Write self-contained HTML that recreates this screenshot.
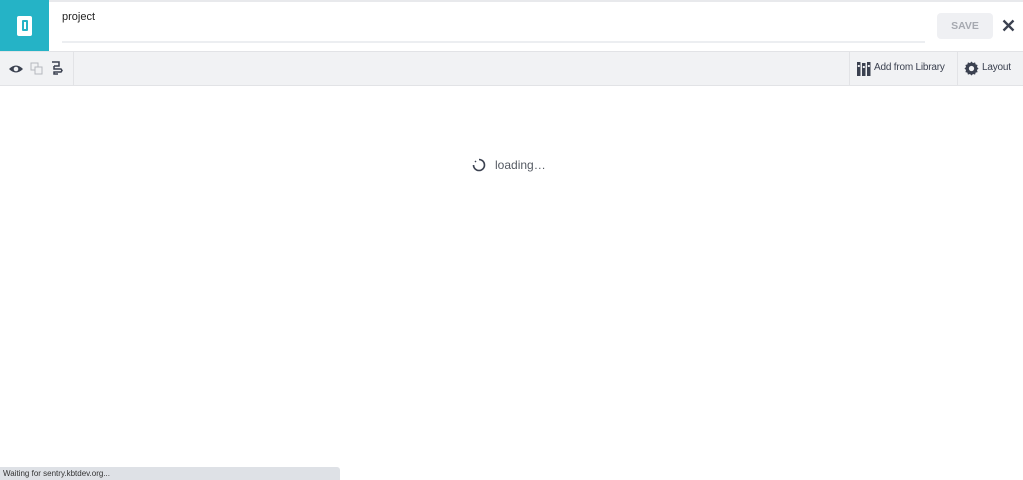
<!DOCTYPE html>
<html><head><style>
*{margin:0;padding:0;box-sizing:border-box}
body{width:1023px;height:480px;background:#fff;font-family:"Liberation Sans",sans-serif;position:relative;overflow:hidden}
.a{position:absolute}
</style></head><body>
<div class="a" style="left:0;top:0;width:1023px;height:2px;background:#e8e9ec"></div>
<div class="a" style="left:0;top:0;width:49px;height:51px;background:#25b3c6"></div>
<div class="a" style="left:17px;top:16px;width:15px;height:20px;background:#fff;border-radius:2px"></div>
<div class="a" style="left:22px;top:20px;width:6px;height:11px;border:2px solid #25b3c6;border-radius:1px"></div>
<div class="a" style="left:62px;top:11px;font-size:11px;color:#222">project</div>
<div class="a" style="left:62px;top:41px;width:863px;height:2px;background:#eceef1"></div>
<div class="a" style="left:937px;top:13px;width:56px;height:26px;background:#eff0f3;border-radius:4px;color:#a6a9b0;font-size:10.5px;font-weight:bold;text-align:center;line-height:26px">SAVE</div>
<svg class="a" style="left:1002px;top:19px" width="13" height="13"><path d="M1.5 1.5L11.5 11.5M11.5 1.5L1.5 11.5" stroke="#3b4150" stroke-width="2.3"/></svg>
<div class="a" style="left:0;top:51px;width:1023px;height:35px;background:#f1f2f4;border-top:1px solid #e2e3e6;border-bottom:1px solid #e2e3e6"></div>
<div class="a" style="left:73px;top:52px;width:1px;height:33px;background:#e2e3e6"></div>
<div class="a" style="left:849px;top:52px;width:1px;height:33px;background:#e2e3e6"></div>
<div class="a" style="left:957px;top:52px;width:1px;height:33px;background:#e2e3e6"></div>
<svg class="a" style="left:8px;top:64px" width="16" height="10"><path d="M1 5Q8 -2 15 5Q8 12 1 5Z" fill="#3b4150"/><circle cx="8" cy="5" r="2.3" fill="#f1f2f4"/></svg>
<svg class="a" style="left:30px;top:62px" width="13" height="13"><rect x="1" y="1" width="7" height="7" fill="none" stroke="#b5b8be"/><rect x="5" y="5" width="7" height="7" fill="#f1f2f4" stroke="#b5b8be"/></svg>
<svg class="a" style="left:50px;top:61px" width="13" height="15"><path d="M2 1H9V5H4M4 5V8H11L12 9.5L11 11H4V13H8" fill="none" stroke="#3b4150" stroke-width="1.5"/></svg>
<svg class="a" style="left:857px;top:61px" width="14" height="15"><rect x="0" y="1" width="3.5" height="14" fill="#3b4150"/><rect x="5" y="2" width="3.5" height="13" fill="#3b4150"/><rect x="10" y="1" width="3.5" height="14" fill="#3b4150"/><rect x="0.8" y="4" width="2" height="2" fill="#f1f2f4"/><rect x="5.8" y="5" width="2" height="2" fill="#f1f2f4"/><rect x="10.8" y="4" width="2" height="2" fill="#f1f2f4"/></svg>
<div class="a" style="left:874px;top:62px;font-size:10px;letter-spacing:-0.2px;color:#3b4150">Add from Library</div>
<svg class="a" style="left:964px;top:61px" width="15" height="15" viewBox="0 0 16 16"><path d="M8 0.5L9.6 2.2L11.8 1.5L12.4 3.6L14.5 4.2L13.8 6.4L15.5 8L13.8 9.6L14.5 11.8L12.4 12.4L11.8 14.5L9.6 13.8L8 15.5L6.4 13.8L4.2 14.5L3.6 12.4L1.5 11.8L2.2 9.6L0.5 8L2.2 6.4L1.5 4.2L3.6 3.6L4.2 1.5L6.4 2.2Z" fill="#3b4150"/><circle cx="8" cy="8" r="2.8" fill="#f1f2f4"/></svg>
<div class="a" style="left:982px;top:62px;font-size:10px;letter-spacing:-0.2px;color:#3b4150">Layout</div>
<svg class="a" style="left:472px;top:158px" width="14" height="14"><path d="M7 1.5A5.5 5.5 0 1 1 1.5 7" fill="none" stroke="#3b4150" stroke-width="1.6"/><path d="M3 3L4 4" stroke="#3b4150" stroke-width="1.4"/></svg>
<div class="a" style="left:495px;top:158px;font-size:12px;color:#555a63">loading…</div>
<div class="a" style="left:0;top:467px;width:340px;height:13px;background:#dee1e6;border-top-right-radius:3px;font-size:8px;color:#333;padding-left:3px;line-height:13px">Waiting for sentry.kbtdev.org...</div>
</body></html>
